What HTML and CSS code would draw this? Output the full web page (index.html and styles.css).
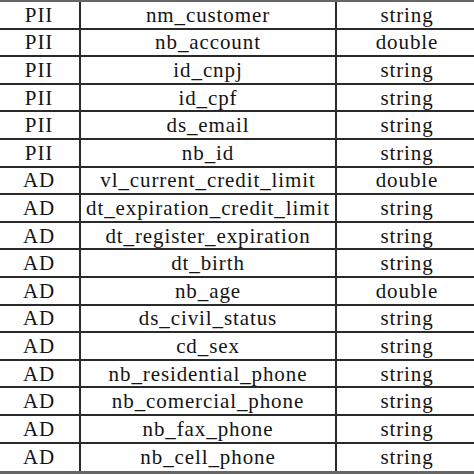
FILE: index.html
```html
<!DOCTYPE html>
<html>
<head>
<meta charset="utf-8">
<link rel="stylesheet" href="styles.css">
</head>
<body>
<div class="sheet">
  <div class="grid">
    <div class="c k">PII</div><div class="c n">nm_customer</div><div class="c t">string</div>
    <div class="c k">PII</div><div class="c n">nb_account</div><div class="c t">double</div>
    <div class="c k">PII</div><div class="c n">id_cnpj</div><div class="c t">string</div>
    <div class="c k">PII</div><div class="c n">id_cpf</div><div class="c t">string</div>
    <div class="c k">PII</div><div class="c n">ds_email</div><div class="c t">string</div>
    <div class="c k">PII</div><div class="c n">nb_id</div><div class="c t">string</div>
    <div class="c k">AD</div><div class="c n">vl_current_credit_limit</div><div class="c t">double</div>
    <div class="c k">AD</div><div class="c n">dt_expiration_credit_limit</div><div class="c t">string</div>
    <div class="c k">AD</div><div class="c n">dt_register_expiration</div><div class="c t">string</div>
    <div class="c k">AD</div><div class="c n">dt_birth</div><div class="c t">string</div>
    <div class="c k">AD</div><div class="c n">nb_age</div><div class="c t">double</div>
    <div class="c k">AD</div><div class="c n">ds_civil_status</div><div class="c t">string</div>
    <div class="c k">AD</div><div class="c n">cd_sex</div><div class="c t">string</div>
    <div class="c k">AD</div><div class="c n">nb_residential_phone</div><div class="c t">string</div>
    <div class="c k">AD</div><div class="c n">nb_comercial_phone</div><div class="c t">string</div>
    <div class="c k">AD</div><div class="c n">nb_fax_phone</div><div class="c t">string</div>
    <div class="c k">AD</div><div class="c n">nb_cell_phone</div><div class="c t">string</div>
  </div>
</div>
</body>
</html>
```
FILE: styles.css
```css
html, body {
  margin: 0;
  padding: 0;
  background: #ffffff;
}
.sheet {
  width: 474px;
  height: 474px;
  overflow: hidden;
  background: #ffffff;
}
.grid {
  display: grid;
  grid-template-columns: 82px 256px 140px;
  grid-template-rows: repeat(17, 27.6px);
  margin-left: -1px;
  width: 478px;
  border-top: 2px solid #666666;
  border-bottom: 3px solid #666666;
  font-family: "Liberation Serif", "Times New Roman", serif;
  font-size: 21px;
  letter-spacing: 0.9px;
  color: #141414;
}
.c {
  box-sizing: border-box;
  display: flex;
  align-items: center;
  justify-content: center;
  border-bottom: 2px solid #2a2a2a;
  white-space: nowrap;
  line-height: 1;
  padding-top: 1px;
}
.c:nth-last-child(-n+3) {
  border-bottom: none;
}
.k, .n {
  border-right: 2px solid #2a2a2a;
}
```
